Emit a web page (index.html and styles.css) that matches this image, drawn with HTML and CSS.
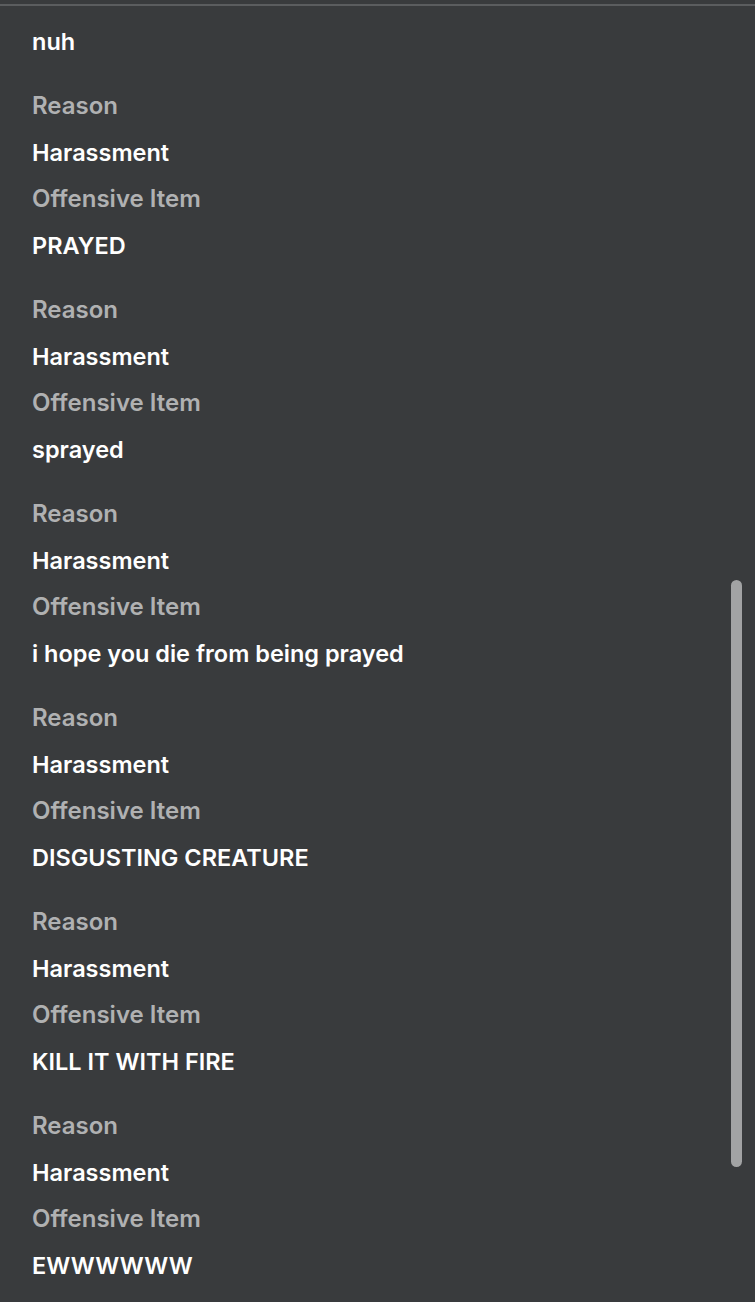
FILE: index.html
```html
<!DOCTYPE html>
<html>
<head>
<meta charset="utf-8">
<link rel="stylesheet" href="styles.css">
</head>
<body>
<div class="panel">
  <div class="list">
    <div class="group">
      <div class="value">nuh</div>
    </div>
    <div class="group">
      <div class="label">Reason</div>
      <div class="value">Harassment</div>
      <div class="label">Offensive Item</div>
      <div class="value">PRAYED</div>
    </div>
    <div class="group">
      <div class="label">Reason</div>
      <div class="value">Harassment</div>
      <div class="label">Offensive Item</div>
      <div class="value">sprayed</div>
    </div>
    <div class="group">
      <div class="label">Reason</div>
      <div class="value">Harassment</div>
      <div class="label">Offensive Item</div>
      <div class="value">i hope you die from being prayed</div>
    </div>
    <div class="group">
      <div class="label">Reason</div>
      <div class="value">Harassment</div>
      <div class="label">Offensive Item</div>
      <div class="value">DISGUSTING CREATURE</div>
    </div>
    <div class="group">
      <div class="label">Reason</div>
      <div class="value">Harassment</div>
      <div class="label">Offensive Item</div>
      <div class="value">KILL IT WITH FIRE</div>
    </div>
    <div class="group">
      <div class="label">Reason</div>
      <div class="value">Harassment</div>
      <div class="label">Offensive Item</div>
      <div class="value">EWWWWWW</div>
    </div>
  </div>
  <div class="scrollbar"></div>
</div>
</body>
</html>
```

FILE: styles.css
```css
html, body {
  margin: 0;
  padding: 0;
  background: #393b3d;
}
body {
  font-family: Inter, "Open Sans", sans-serif;
  height: 1302px;
  overflow: hidden;
}
.panel {
  position: relative;
  margin-top: 4px;
  border-top: 2px solid #5b5d5f;
  height: 1296px;
}
.list {
  display: flex;
  flex-direction: column;
  gap: 40px;
  padding: 24px 0 0 32px;
}
.group {
  display: flex;
  flex-direction: column;
  gap: 22.67px;
}
.label, .value {
  font-size: 23.5px;
  line-height: 24px;
  font-weight: 600;
  white-space: nowrap;
}
.label {
  font-size: 24px;
  color: #b0b1b2;
}
.value {
  color: #ffffff;
}
.scrollbar {
  position: absolute;
  top: 574px;
  left: 731px;
  width: 11px;
  height: 587px;
  border-radius: 6px;
  background: #a2a3a4;
}
```
